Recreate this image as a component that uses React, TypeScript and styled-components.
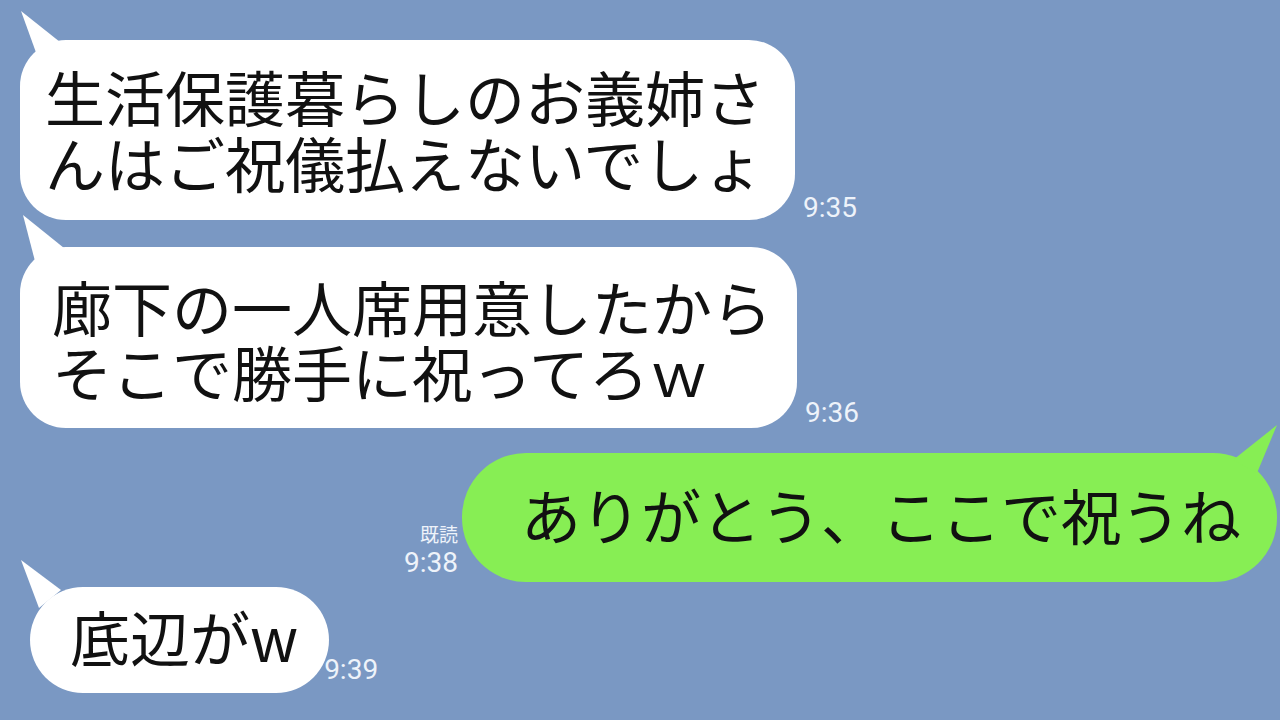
import React from "react";
import styled, { createGlobalStyle } from "styled-components";

const GlobalStyle = createGlobalStyle`
  html, body {
    margin: 0;
    padding: 0;
    background: #7a98c3;
    overflow: hidden;
  }
  body {
    font-family: "Noto Sans CJK JP", "Noto Sans", sans-serif;
  }
`;

const Screen = styled.div`
  width: 1280px;
  height: 720px;
  box-sizing: border-box;
  padding: 40px 3px 0 20px;
  background: #7a98c3;
  display: flex;
  flex-direction: column;
`;

const Row = styled.div<{ $mine?: boolean; $top: number; $indent?: number }>`
  display: flex;
  align-items: flex-end;
  justify-content: ${(p) => (p.$mine ? "flex-end" : "flex-start")};
  margin-top: ${(p) => p.$top}px;
  margin-left: ${(p) => p.$indent || 0}px;
  gap: ${(p) => (p.$mine ? 4 : 8)}px;
`;

const Bubble = styled.div<{
  $green?: boolean;
  $pad: string;
  $radius: number;
  $lh: number;
}>`
  position: relative;
  background: ${(p) => (p.$green ? "#87ee54" : "#ffffff")};
  color: #111;
  font-family: "Noto Sans CJK JP", sans-serif;
  font-size: 60px;
  line-height: ${(p) => p.$lh}px;
  padding: ${(p) => p.$pad};
  border-radius: ${(p) => p.$radius}px;
  white-space: nowrap;
`;

// speech-bubble tail, drawn over the bubble's corner
const Tail = styled.svg<{ $right?: boolean; $dx: number; $dy: number }>`
  position: absolute;
  top: ${(p) => p.$dy}px;
  ${(p) => (p.$right ? `right: ${p.$dx}px;` : `left: ${p.$dx}px;`)}
  width: 50px;
  height: 50px;
  overflow: visible;
`;

const Meta = styled.div<{ $lift: number; $shift?: number }>`
  display: flex;
  flex-direction: column;
  align-items: flex-end;
  margin-bottom: ${(p) => p.$lift}px;
  margin-left: ${(p) => p.$shift || 0}px;
  color: #eef3fa;
`;

const Read = styled.span`
  font-family: "Noto Sans CJK JP", sans-serif;
  font-size: 19px;
  line-height: 22px;
  margin-bottom: 4px;
`;

const Time = styled.span`
  font-family: "Roboto", "Noto Sans", sans-serif;
  font-size: 28px;
  line-height: 28px;
`;

const Line = styled.div``;

export default function App() {
  return (
    <>
      <GlobalStyle />
      <Screen>
        <Row $top={0}>
          <Bubble $pad="23px 30px 25px 25px" $radius={46} $lh={66}>
            <Tail $dx={0} $dy={-30} viewBox="0 0 50 50">
              <polygon points="1,1 40,32 18,48" fill="#fff" />
            </Tail>
            <Line>生活保護暮らしのお義姉さ</Line>
            <Line>んはご祝儀払えないでしょ</Line>
          </Bubble>
          <Meta $lift={-2}>
            <Time>9:35</Time>
          </Meta>
        </Row>

        <Row $top={27}>
          <Bubble $pad="26px 25px 25px 32px" $radius={46} $lh={65}>
            <Tail $dx={2} $dy={-32} viewBox="0 0 50 50">
              <polygon points="1,0 42,33 14,50" fill="#fff" />
            </Tail>
            <Line>廊下の一人席用意したから</Line>
            <Line>そこで勝手に祝ってろｗ</Line>
          </Bubble>
          <Meta $lift={1}>
            <Time>9:36</Time>
          </Meta>
        </Row>

        <Row $mine $top={25}>
          <Meta $lift={5}>
            <Read>既読</Read>
            <Time>9:38</Time>
          </Meta>
          <Bubble $green $pad="28px 36px 35px 59px" $radius={64} $lh={66}>
            <Tail $right $dx={0} $dy={-28} viewBox="0 0 50 50">
              <polygon points="50,0 6,35 30,48" fill="#87ee54" />
            </Tail>
            <Line>ありがとう、ここで祝うね</Line>
          </Bubble>
        </Row>

        <Row $top={5} $indent={10}>
          <Bubble $pad="16px 31px 24px 40px" $radius={53} $lh={66}>
            <Tail $dx={-9} $dy={-27} viewBox="0 0 50 50">
              <polygon points="0,0 40,30 18,48" fill="#fff" />
            </Tail>
            <Line>底辺がw</Line>
          </Bubble>
          <Meta $lift={9} $shift={-13}>
            <Time>9:39</Time>
          </Meta>
        </Row>
      </Screen>
    </>
  );
}
